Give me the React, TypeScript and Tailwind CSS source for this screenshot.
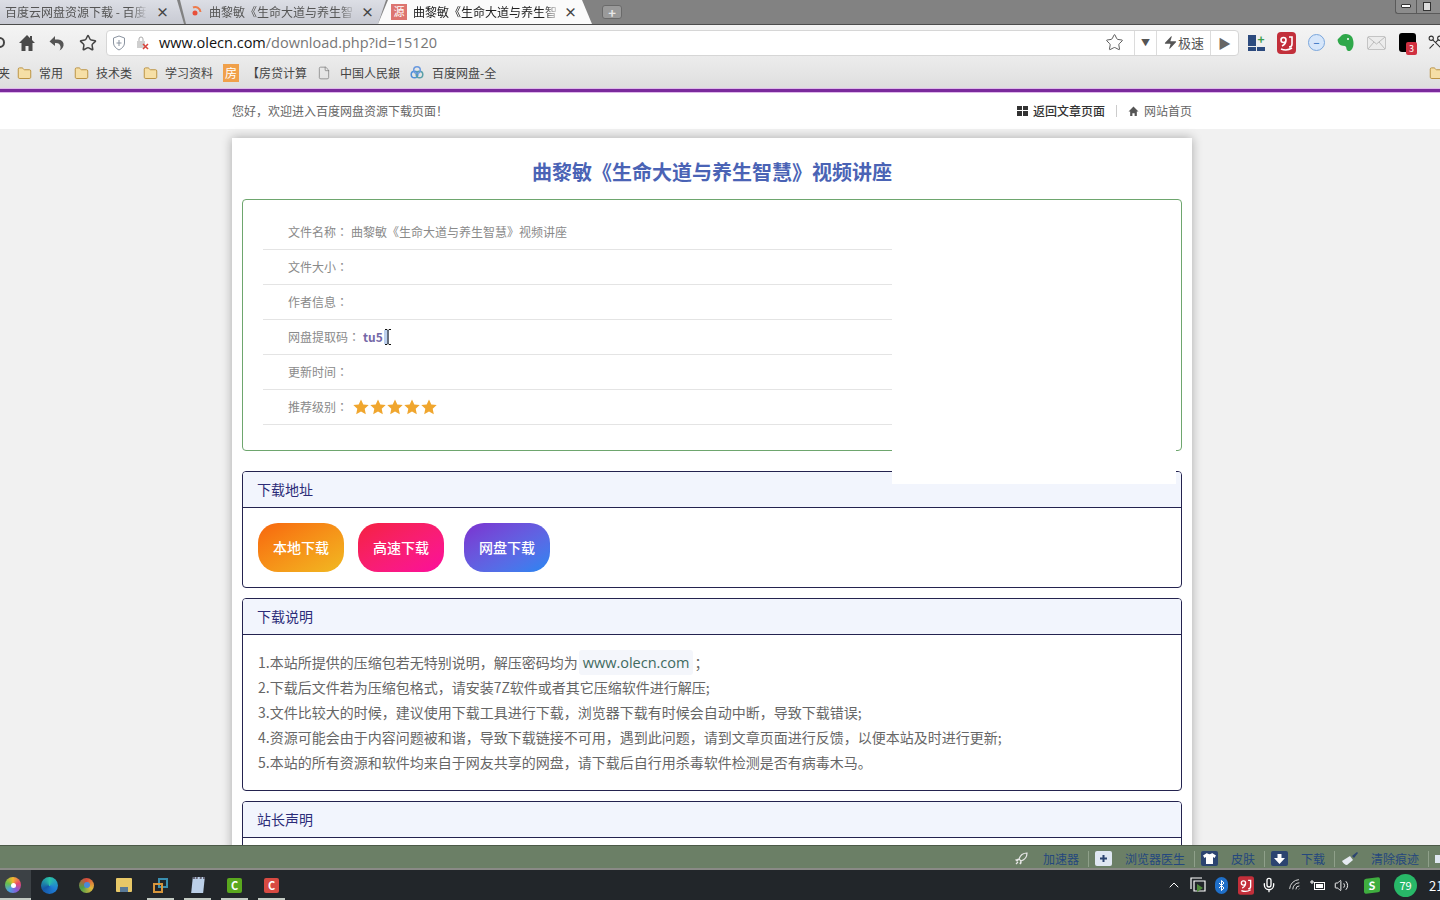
import { ChevronUp, File, Folder, Mic, Scissors, Star, Volume2, Wifi, Zap } from 'lucide-react';

const CN = "font-['Noto_Sans_CJK_SC','Noto_Sans',sans-serif]";

const BOOKMARKS = [
  { label: '常用', w: 'w-[57px]' },
  { label: '技术类', w: 'w-[69px]' },
  { label: '学习资料', w: 'w-[81px]' },
];

const NOTES = [
  '2.下载后文件若为压缩包格式，请安装7Z软件或者其它压缩软件进行解压;',
  '3.文件比较大的时候，建议使用下载工具进行下载，浏览器下载有时候会自动中断，导致下载错误;',
  '4.资源可能会由于内容问题被和谐，导致下载链接不可用，遇到此问题，请到文章页面进行反馈，以便本站及时进行更新;',
  '5.本站的所有资源和软件均来自于网友共享的网盘，请下载后自行用杀毒软件检测是否有病毒木马。',
];

function Tab({ title, active, icon, className, textClass }: { title: string; active?: boolean; icon?: React.ReactNode; className?: string; textClass: string }) {
  return (
    <div className={`flex h-[24px] shrink-0 items-center pb-[1px] ${active ? 'bg-[#fbfbfb]' : 'bg-gradient-to-b from-[#dcdee5] to-[#c8cad3]'} ${className ?? ''}`}>
      {icon}
      <span className={`whitespace-nowrap text-[12px] [mask-image:linear-gradient(to_right,black_88%,transparent)] ${active ? 'text-[#222]' : 'text-[#555]'} ${textClass}`}>{title}</span>
      <span className="text-[13px] font-bold leading-none text-[#444]">×</span>
    </div>
  );
}

function Home() {
  return (
    <svg width="18" height="18" viewBox="0 0 18 18">
      <path d="M9 1 1 9h2.500v8h4v-5h3v5h4V9H17l-3-3V2h-2v2z" fill="#4a4a4a" />
    </svg>
  );
}

function Undo() {
  return (
    <svg width="18" height="18" viewBox="0 0 18 18">
      <path d="M7 2 1.500 7.500 7 12V9c3-.3 5 .7 5.500 3.500.3 1.500-.3 3-1 4 3-1.500 4.500-4 4-7C15 6.500 11.500 5 7 5.500z" fill="#555" />
    </svg>
  );
}

function RedSquiggle({ size, radius }: { size: number; radius: number }) {
  return (
    <svg width={size} height={size + 3} viewBox="0 0 19 22" className="shrink-0">
      <rect width="19" height="22" rx={radius} fill="#c22f3a" />
      <path d="M4 8a2.500 2.500 0 1 0 5 0 2.500 2.500 0 1 0-5 0M9 8c0 3-2 5-4 6M12 5h3v7c0 2-1 3-3 3M4 17c4 1.500 8 1 11-1" fill="none" stroke="#fff" strokeWidth="1.600" />
    </svg>
  );
}

function Row({ label, children }: { label: string; children?: React.ReactNode }) {
  return (
    <div className="flex h-[35px] items-center border-b border-[#e4e4e4] pl-[25px] text-[12px] text-[#8a8a8a]">
      <span>{label}</span>
      <span className="font-['Noto_Sans_CJK_TC',sans-serif]">：</span>
      {children}
    </div>
  );
}

function Section({ title, className, children }: { title: string; className?: string; children?: React.ReactNode }) {
  return (
    <section className={`overflow-hidden rounded-[4px] border border-[#24234f] ${className ?? ''}`}>
      <div className="flex h-[36px] items-center border-b border-[#24234f] bg-[#f2f5fd] pl-[14px] text-[14px] text-[#2c2c78]">{title}</div>
      {children}
    </section>
  );
}

function StatusItem({ icon, label, w }: { icon: React.ReactNode; label: string; w: string }) {
  return (
    <div className={`flex h-[16px] items-center justify-between border-r border-[#8fa08a] pr-[9px] ${w}`}>
      {icon}
      <span className="text-[12px] text-[#24477e]">{label}</span>
    </div>
  );
}

function Badge({ children, light }: { children: React.ReactNode; light?: boolean }) {
  return (
    <span className={`flex h-[15px] w-[17px] items-center justify-center rounded-[2px] ${light ? 'bg-[#dfe7f2]' : 'bg-[#2c4470]'}`}>{children}</span>
  );
}

function TaskCell({ children, running }: { children: React.ReactNode; running?: boolean }) {
  return (
    <div className="relative flex h-full w-[37px] shrink-0 items-center justify-center">
      {children}
      {running && <span className="absolute bottom-0 left-[5px] h-[2px] w-[27px] bg-[#c4cbc4]" />}
    </div>
  );
}

export default function App() {
  return (
    <div className={`flex h-[900px] w-[1440px] flex-col overflow-hidden bg-[#f1f1f1] ${CN}`}>
      {/* tab strip */}
      <div className="relative flex h-[25px] shrink-0 items-start border-b border-[#4c4c4c] bg-[#828282]">
        <Tab
          title="百度云网盘资源下载 - 百度"
          textClass="w-[143px] mr-[8px]"
          className="w-[184px] pl-[5px] [clip-path:polygon(0_0,177px_0,100%_100%,0_100%)]"
        />
        <Tab
          title="曲黎敏《生命大道与养生智"
          textClass="w-[148px] mr-[4px]"
          className="ml-[-4px] w-[208px] pl-[10px] [clip-path:polygon(0_0,206px_0,198px_100%,6px_100%)]"
          icon={
            <svg className="mr-[7px] shrink-0" width="12" height="13" viewBox="0 0 12 13">
              <path d="M3 2.500C6 1 10 3 10.500 7" fill="none" stroke="#ee7a4a" strokeWidth="2" />
              <circle cx="5" cy="8" r="2.500" fill="#e8503a" />
            </svg>
          }
        />
        <Tab
          title="曲黎敏《生命大道与养生智"
          active
          textClass="w-[148px] mr-[3px]"
          className="ml-[-10px] w-[214px] pl-[13px] [clip-path:polygon(10px_0,204px_0,100%_100%,0_100%)]"
          icon={
            <span className="mr-[6px] flex h-[16px] w-[16px] shrink-0 items-center justify-center bg-[#dd7570] text-[11px] leading-none text-white">源</span>
          }
        />
        <div className="mt-[5px] ml-[10px] flex h-[14px] w-[20px] items-center justify-center rounded-[3px] border border-[#6a6a6a] bg-[#9a9a9a] text-[13px] leading-none font-bold text-[#e8e8e8]">+</div>
        <div className="ml-auto mt-[-1px] flex h-[15px] rounded-bl-[3px] border-b border-l border-[#5a5a5a] bg-[#8c8c8c]">
          <div className="flex w-[21px] items-center justify-center border-r border-[#5a5a5a]">
            <div className="h-[4px] w-[10px] rounded-[1px] border border-[#333] bg-white" />
          </div>
          <div className="flex w-[23px] items-center justify-start pl-[6px]">
            <div className="h-[9px] w-[8px] border border-[#333] bg-[#ddd]" />
          </div>
        </div>
      </div>

      {/* toolbar */}
      <div className="flex h-[35px] shrink-0 items-center bg-gradient-to-b from-[#f4f4f4] to-[#eaeaea]">
        <div className="ml-[-6px] h-[11px] w-[11px] shrink-0 rounded-full border-2 border-[#444]" />
        <div className="ml-[13px]"><Home /></div>
        <div className="ml-[12px]"><Undo /></div>
        <Star size={18} strokeWidth={2} className="ml-[13px] shrink-0 text-[#444]" />
        <div className="ml-[9px] flex h-[26px] w-[1133px] shrink-0 items-center rounded-[4px] border border-[#d6d6d6] bg-white">
          <svg className="ml-[5px]" width="14" height="16" viewBox="0 0 14 16">
            <path d="M7 1 1.500 3v5c0 3 2.500 5.500 5.500 7 3-1.500 5.500-4 5.500-7V3z" fill="none" stroke="#8a93a0" />
            <path d="M7 5v6M4.500 8h5" stroke="#8a93a0" />
          </svg>
          <svg className="ml-[10px]" width="13" height="14" viewBox="0 0 13 14">
            <rect x="1" y="5" width="8" height="7" fill="#cfcfcf" />
            <path d="M3 5V3a2 2 0 0 1 4 0v2" fill="none" stroke="#aaa" />
            <path d="m7 8 5 5m0-5-5 5" stroke="#d9423a" strokeWidth="1.500" />
          </svg>
          <span className="ml-[10px] font-['Open_Sans',sans-serif] text-[14.5px] text-[#111]">www.olecn.com</span>
          <span className="font-['Open_Sans',sans-serif] text-[14.5px] text-[#777]">/download.php?id=15120</span>
          <Star size={19} strokeWidth={1.200} className="ml-auto mr-[10px] text-[#555]" />
          <div className="flex h-full w-[22px] items-center justify-center border-l border-[#dcdcdc] text-[9px] text-[#555]">▼</div>
          <div className="flex h-full w-[55px] items-center justify-center border-x border-[#dcdcdc] text-[13px] text-[#555]">
            <Zap size={15} fill="#555" strokeWidth={0} />
            极速
          </div>
          <div className="flex h-full w-[27px] items-center justify-center text-[13px] text-[#666]">▶</div>
        </div>
        <div className="ml-[9px] grid h-[16px] w-[17px] shrink-0 grid-cols-2 gap-[1px]">
          <div className="bg-[#2c4a7e]" />
          <div className="text-center text-[12px] font-bold leading-[8px] text-[#3a9c4a]">+</div>
          <div className="bg-[#2c4a7e]" />
          <div className="bg-[#2c4a7e]" />
        </div>
        <div className="ml-[12px]"><RedSquiggle size={19} radius={4} /></div>
        <div className="ml-[12px] flex h-[17px] w-[17px] shrink-0 items-center justify-center rounded-full border border-[#7aa6dc] bg-[#d6e6fa] text-[10px] font-bold leading-none text-[#4a80c8]">−</div>
        <svg className="ml-[12px] shrink-0" width="18" height="20" viewBox="0 0 18 20">
          <path d="M5 2c3-2 8-1 10 2 2 4 2 9 0 12-1 2-4 3-5 1-1-1 0-3-2-4-3 0-6-1-7-4 0-1-1-2 0-3z" fill="#2fa84a" />
          <circle cx="11" cy="6" r="1" fill="#fff" />
        </svg>
        <div className="ml-[12px] flex h-[14px] w-[19px] shrink-0 items-center justify-center rounded-[2px] border border-[#c4c4c4] bg-[#ececec]">
          <svg width="17" height="12" viewBox="0 0 17 12"><path d="m0 0 8.500 7L17 0M0 12l6-7m11 7-6-7" fill="none" stroke="#bbb" /></svg>
        </div>
        <div className="relative ml-[13px] h-[19px] w-[17px] shrink-0 rounded-[3px] bg-black">
          <span className="absolute top-[9px] left-[7px] flex h-[13px] w-[11px] items-center justify-center rounded-[2px] bg-[#d03040] text-[9px] leading-none text-white">3</span>
        </div>
        <Scissors size={17} strokeWidth={1.500} className="ml-[11px] shrink-0 rotate-90 text-[#333]" />
      </div>

      {/* bookmarks */}
      <div className="flex h-[28px] shrink-0 items-center bg-gradient-to-b from-[#ebebeb] to-[#dedede] pb-[2px] text-[12px] text-[#444]">
        <span className="ml-[-2px] w-[19px]">夹</span>
        {BOOKMARKS.map((b) => (
          <div key={b.label} className={`flex items-center gap-[7px] ${b.w}`}>
            <Folder size={15} strokeWidth={1.500} fill="#f6dfa6" className="text-[#b98f3c]" />
            <span>{b.label}</span>
          </div>
        ))}
        <div className="ml-[-1px] flex h-[18px] w-[16px] items-center justify-center bg-[#f0a04a] text-[12px] leading-none text-white">房</div>
        <span className="ml-[8px]">【房贷计算</span>
        <File size={14} strokeWidth={1.200} className="ml-[10px] text-[#777]" />
        <span className="ml-[9px]">中国人民銀</span>
        <svg className="ml-[9px]" width="16" height="16" viewBox="0 0 16 16">
          <circle cx="5.500" cy="9.500" r="3.300" fill="none" stroke="#4f8fd8" strokeWidth="1.500" />
          <circle cx="10.500" cy="9.500" r="3.300" fill="none" stroke="#5aa0a8" strokeWidth="1.500" />
          <circle cx="8" cy="5" r="3.300" fill="none" stroke="#6a9adf" strokeWidth="1.500" />
        </svg>
        <span className="ml-[7px]">百度网盘-全</span>
        <Folder size={15} strokeWidth={1.500} fill="#f6dfa6" className="ml-auto mr-[-4px] text-[#b98f3c]" />
      </div>

      <div className="h-[5px] shrink-0 border-y border-[#e0b8ec] bg-[#7a2a9c]" />

      {/* page */}
      <main className="relative min-h-0 flex-1 overflow-hidden">
        <div className="flex h-[36px] bg-white pb-[1px]">
          <div className="ml-[232px] flex w-[960px] items-center text-[12px] text-[#666]">
            <span>您好，欢迎进入百度网盘资源下载页面！</span>
            <div className="ml-auto grid h-[10px] w-[11px] grid-cols-2 gap-[1px]">
              <i className="bg-[#333]" /><i className="bg-[#333]" /><i className="bg-[#333]" /><i className="bg-[#333]" />
            </div>
            <span className="ml-[5px] font-medium text-[#333]">返回文章页面</span>
            <div className="mx-[11px] h-[12px] w-px bg-[#ccc]" />
            <svg width="11" height="10" viewBox="0 0 18 18"><path d="M9 1 0 10h3v8h4v-5h4v5h4v-8h3z" fill="#555" /></svg>
            <span className="ml-[5px]">网站首页</span>
          </div>
        </div>

        <div className="ml-[232px] mt-[9px] w-[960px] bg-white px-[10px] shadow-[0_0_10px_rgba(0,0,0,0.3)]">
          <h1 className="flex h-[61px] items-center justify-center pt-[6px] text-[20px] font-bold text-[#4a63b5]">曲黎敏《生命大道与养生智慧》视频讲座</h1>

          <div className="h-[252px] rounded-[4px] border border-[#6ea66e] px-[20px] pt-[15px]">
            <Row label="文件名称">
              <span className="ml-[3px]">曲黎敏《生命大道与养生智慧》视频讲座</span>
            </Row>
            <Row label="文件大小" />
            <Row label="作者信息" />
            <Row label="网盘提取码">
              <span className="ml-[3px] font-bold text-[#7468a8]">tu5</span>
              <svg className="ml-[1px]" width="8" height="16" viewBox="0 0 8 16">
                <rect x="0" y="1" width="5" height="14" fill="#bcd0ee" />
                <path d="M1 .5h2l1 1 1-1h2M4 1.500v13M1 15.500h2l1-1 1 1h2" fill="none" stroke="#111" />
              </svg>
            </Row>
            <Row label="更新时间" />
            <Row label="推荐级别">
              <span className="ml-[5px] mt-[-1px] flex gap-[1px]">
                {[0, 1, 2, 3, 4].map((i) => (
                  <svg key={i} width="16" height="16" viewBox="0 0 16 16">
                    <path d="m8 .5 2.300 5 5.400.6-4 3.700 1.100 5.400L8 12.500l-4.800 2.700 1.100-5.400-4-3.700 5.400-.6z" fill="#f0a62e" />
                  </svg>
                ))}
              </span>
            </Row>
          </div>

          <Section title="下载地址" className="mt-[20px] h-[117px]">
            <div className="flex gap-[14px] pt-[15px] pl-[15px] text-[14px] font-medium text-white">
              <div className="flex h-[49px] w-[86px] items-center justify-center rounded-[20px] bg-gradient-to-br from-[#f7650e] to-[#f0b922]">本地下载</div>
              <div className="flex h-[49px] w-[86px] items-center justify-center rounded-[20px] bg-gradient-to-br from-[#f5203e] to-[#fc0a9c]">高速下载</div>
              <div className="ml-[6px] flex h-[49px] w-[86px] items-center justify-center rounded-[20px] bg-gradient-to-br from-[#7a2fd0] to-[#1c86f2]">网盘下载</div>
            </div>
          </Section>

          <Section title="下载说明" className="mt-[10px] h-[193px]">
            <div className="pt-[15px] pl-[15px] text-[14px] leading-[25px] text-[#666]">
              <p>
                1.本站所提供的压缩包若无特别说明，解压密码均为
                <code className="mx-[1px] rounded-[3px] bg-[#f4f6fb] px-[4px] py-[3px] font-['Open_Sans',sans-serif] text-[14.5px] text-[#3f6a60]">www.olecn.com</code>
                ；
              </p>
              {NOTES.map((n) => (
                <p key={n}>{n}</p>
              ))}
            </div>
          </Section>

          <Section title="站长声明" className="mt-[10px] h-[100px]" />
        </div>

        {/* blank ad slot covering the right of the info box */}
        <div className="absolute top-[107px] left-[892px] h-[284px] w-[284px] bg-white" />
      </main>

      {/* browser status bar */}
      <div className="flex h-[25px] shrink-0 items-center justify-end gap-[6px] border-t border-[#4c5a48] border-b-[2px] border-b-[#8a8a86] bg-[#6b7f66] pt-[3px]">
        <StatusItem
          w="w-[75px]"
          icon={<svg width="15" height="15" viewBox="0 0 15 15"><path d="M13 2c-4 0-7 3-8 6l2 2c3-1 6-4 6-8zM5 8 2 9l1 1zm2 2-1 3 1-1zM2 13l2-2" fill="none" stroke="#e8e8e8" strokeWidth="1.200" /></svg>}
          label="加速器"
        />
        <StatusItem
          w="w-[100px]"
          icon={<Badge light><svg width="9" height="9" viewBox="0 0 9 9"><path d="M3.500 1h2v2.500H8v2H5.500V8h-2V5.500H1v-2h2.500z" fill="#2c4470" /></svg></Badge>}
          label="浏览器医生"
        />
        <StatusItem
          w="w-[64px]"
          icon={<Badge><svg width="13" height="11" viewBox="0 0 13 11"><path d="M4 0 0 2.500 1.500 5 3 4v7h7V4l1.500 1L13 2.500 9 0c-.5 1.500-4.500 1.500-5 0z" fill="#fff" /></svg></Badge>}
          label="皮肤"
        />
        <StatusItem
          w="w-[64px]"
          icon={<Badge><svg width="11" height="10" viewBox="0 0 11 10"><path d="M3.500 0h4v4H11L5.500 10 0 4h3.500z" fill="#fff" /></svg></Badge>}
          label="下载"
        />
        <StatusItem
          w="w-[88px]"
          icon={<svg width="18" height="15" viewBox="0 0 18 15"><path d="M1 10 9 5l3 4-6 5c-2 0-4-2-5-4z" fill="#e6ebf2" /><path d="m11 5 5-4 1 1-4 5z" fill="#2c4470" /></svg>}
          label="清除痕迹"
        />
        <div className="h-[8px] w-[5px] bg-[#dfe7f2]" />
      </div>

      {/* windows taskbar */}
      <div className="flex h-[30px] shrink-0 items-center bg-[#22262a]">
        <div className="relative flex h-full w-[31px] shrink-0 items-center bg-[#3c4145] pl-[5px]">
          <div className="flex h-[16px] w-[16px] items-center justify-center rounded-full bg-[conic-gradient(#f5b82e,#e8486a,#8a5ad8,#4aa0e0,#6ac04a,#f5b82e)]">
            <div className="h-[5px] w-[5px] rounded-full bg-white" />
          </div>
          <span className="absolute bottom-0 left-0 h-[2px] w-[31px] bg-[#c4cbc4]" />
        </div>
        <TaskCell>
          <div className="h-[17px] w-[17px] rounded-full bg-[conic-gradient(#2bc3a6,#1f7ed6,#1558a8,#2bc3a6)]" />
        </TaskCell>
        <TaskCell>
          <div className="flex h-[15px] w-[15px] items-center justify-center rounded-full bg-[conic-gradient(#d8483c,#e0b83c,#4aa04a,#d8483c)]">
            <div className="h-[6px] w-[6px] rounded-full bg-[#4a8ad8]" />
          </div>
        </TaskCell>
        <TaskCell>
          <div className="flex h-[14px] w-[16px] items-end rounded-[1px] bg-[#e8c868]">
            <div className="mx-auto h-[5px] w-[8px] bg-[#5a7a98]" />
          </div>
        </TaskCell>
        <TaskCell running>
          <div className="relative h-[15px] w-[15px]">
            <div className="absolute right-0 top-0 h-[10px] w-[10px] border-2 border-[#3a8fb0]" />
            <div className="absolute bottom-0 left-0 h-[10px] w-[10px] border-2 border-[#d8963c]" />
          </div>
        </TaskCell>
        <TaskCell running>
          <div className="h-[16px] w-[12px] skew-x-[-6deg] border-t-2 border-dotted border-[#667] bg-[#bcd0e8]" />
        </TaskCell>
        <TaskCell running>
          <div className="flex h-[15px] w-[15px] items-center justify-center rounded-[2px] bg-[#5aa81e] text-[11px] font-bold leading-none text-white">C</div>
        </TaskCell>
        <TaskCell running>
          <div className="flex h-[15px] w-[15px] items-center justify-center rounded-[2px] bg-[#d84a42] text-[11px] font-bold leading-none text-white">C</div>
        </TaskCell>

        <div className="ml-auto flex items-center text-white">
          <ChevronUp size={16} strokeWidth={1.500} />
          <svg className="ml-[8px]" width="16" height="16" viewBox="0 0 16 16">
            <path d="M1 12V1h11M4 4h11v10H4z" fill="none" stroke="#fff" strokeWidth="1.200" />
            <path d="m7 7 6 4-6 4z" fill="#4f8a3a" />
          </svg>
          <div className="ml-[9px] flex h-[17px] w-[13px] items-center justify-center rounded-full bg-[#1f6fc8]">
            <svg width="7" height="11" viewBox="0 0 7 11"><path d="m1 3 5 5-2.500 2.500v-10L6 3 1 8" fill="none" stroke="#fff" /></svg>
          </div>
          <div className="ml-[10px]"><RedSquiggle size={16} radius={3} /></div>
          <Mic size={16} strokeWidth={2} className="ml-[7px]" />
          <Wifi size={15} strokeWidth={1.500} className="ml-[11px] -rotate-45 text-[#ddd]" />
          <svg className="ml-[7px]" width="16" height="12" viewBox="0 0 16 12">
            <path d="M0 3h3M2 1v4M3 3h1" stroke="#fff" />
            <rect x="4.500" y="3.500" width="10" height="7" fill="#22262a" stroke="#fff" />
            <rect x="6" y="5" width="7" height="4" fill="#fff" />
          </svg>
          <Volume2 size={15} strokeWidth={1.500} className="ml-[8px]" />
          <div className="ml-[15px] flex h-[15px] w-[16px] -skew-y-6 items-center justify-center rounded-[2px] bg-[#3fae3f] text-[11px] font-bold leading-none">S</div>
          <div className="ml-[14px] flex h-[23px] w-[23px] items-center justify-center rounded-full bg-[#28b868] text-[11px] leading-none">79</div>
          <span className="ml-[12px] w-[11px] whitespace-nowrap text-[13px] leading-none">21</span>
        </div>
      </div>
    </div>
  );
}
